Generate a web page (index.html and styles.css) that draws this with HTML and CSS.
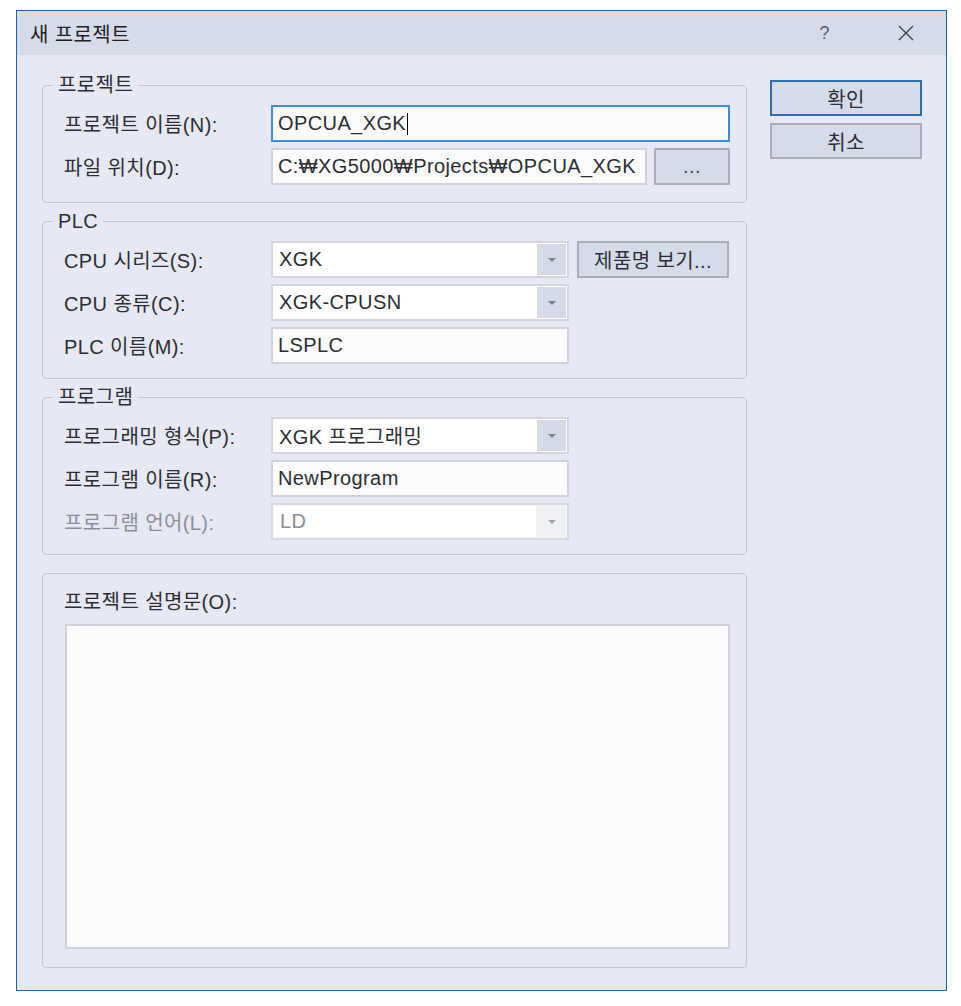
FILE: index.html
```html
<!DOCTYPE html>
<html lang="ko">
<head>
    <meta charset="UTF-8">
    <meta name="viewport" content="width=device-width, initial-scale=1.0">
    <title>새 프로젝트</title>
    <link rel="stylesheet" href="styles.css">
</head>
<body>

<div class="dialog">

    <div class="titlebar">
        <span class="title">새 프로젝트</span>
        <span class="title-help">?</span>
        <svg class="title-close" viewBox="0 0 16 16" width="16" height="16">
            <path d="M1 1 L15 15 M15 1 L1 15" stroke="#3a3d42" stroke-width="1.3" fill="none"/>
        </svg>
    </div>

    <div class="dialog-body">

        <div class="main">

            <fieldset class="group group-project">
                <legend>프로젝트</legend>
                <div class="row">
                    <label>프로젝트 이름(N):</label>
                    <div class="field field-focus wide">OPCUA_XGK<span class="caret"></span></div>
                </div>
                <div class="row">
                    <label>파일 위치(D):</label>
                    <div class="field wide">C:₩XG5000₩Projects₩OPCUA_XGK</div>
                    <button type="button" class="btn btn-browse">...</button>
                </div>
            </fieldset>

            <fieldset class="group">
                <legend>PLC</legend>
                <div class="row">
                    <label>CPU 시리즈(S):</label>
                    <div class="combo">
                        <span class="combo-text">XGK</span>
                        <span class="combo-arrow"><svg viewBox="0 0 8 4" width="8" height="4"><path d="M0 0 H8 L4 4 Z" fill="#7d838e"/></svg></span>
                    </div>
                    <button type="button" class="btn btn-products">제품명 보기...</button>
                </div>
                <div class="row">
                    <label>CPU 종류(C):</label>
                    <div class="combo">
                        <span class="combo-text">XGK-CPUSN</span>
                        <span class="combo-arrow"><svg viewBox="0 0 8 4" width="8" height="4"><path d="M0 0 H8 L4 4 Z" fill="#7d838e"/></svg></span>
                    </div>
                </div>
                <div class="row">
                    <label>PLC 이름(M):</label>
                    <div class="field short">LSPLC</div>
                </div>
            </fieldset>

            <fieldset class="group">
                <legend>프로그램</legend>
                <div class="row">
                    <label>프로그래밍 형식(P):</label>
                    <div class="combo">
                        <span class="combo-text">XGK 프로그래밍</span>
                        <span class="combo-arrow"><svg viewBox="0 0 8 4" width="8" height="4"><path d="M0 0 H8 L4 4 Z" fill="#7d838e"/></svg></span>
                    </div>
                </div>
                <div class="row">
                    <label>프로그램 이름(R):</label>
                    <div class="field short">NewProgram</div>
                </div>
                <div class="row disabled">
                    <label>프로그램 언어(L):</label>
                    <div class="combo combo-disabled">
                        <span class="combo-text">LD</span>
                        <span class="combo-arrow"><svg viewBox="0 0 8 4" width="8" height="4"><path d="M0 0 H8 L4 4 Z" fill="#a3a7ae"/></svg></span>
                    </div>
                </div>
            </fieldset>

            <div class="group group-desc">
                <label class="desc-label">프로젝트 설명문(O):</label>
                <div class="memo"></div>
            </div>

        </div>

        <div class="side">
            <button type="button" class="btn btn-default">확인</button>
            <button type="button" class="btn">취소</button>
        </div>

    </div>

</div>

</body>
</html>
```

FILE: styles.css
```css
* {
    box-sizing: border-box;
}

body {
    margin: 0;
    background-color: #fff;
    font-family: "Liberation Sans", "Noto Sans CJK KR", sans-serif;
    font-size: 20px;
    letter-spacing: 0.4px;
    color: #2b2e34;
}

.dialog {
    margin: 10px 0 0 16px;
    width: 931px;
    height: 981px;
    border: 1px solid #1d66ab;
    background-color: #e6e9f3;
    display: flex;
    flex-direction: column;
}

.titlebar {
    height: 44px;
    flex: none;
    background-color: #d5dbe8;
    display: flex;
    align-items: center;
    padding-left: 13px;
}

.title {
    flex: 1;
    color: #1f2126;
}

.title-help {
    font-size: 18px;
    color: #5b5f66;
}

.title-close {
    margin: 0 32px 0 68px;
}

.dialog-body {
    flex: 1;
    display: flex;
    gap: 23px;
    padding: 20px 24px 22px 25px;
}

.main {
    width: 705px;
    display: flex;
    flex-direction: column;
}

.side {
    width: 152px;
    padding-top: 5px;
    display: flex;
    flex-direction: column;
    gap: 7px;
}

.group {
    margin: 0;
    min-width: 0;
    border: 1px solid #c4c8d0;
    border-radius: 4px;
    padding: 10px 16px 14px 10px;
}

.group + .group {
    margin-top: 8px;
}

.group legend {
    padding: 0 5px;
    line-height: 20px;
}

.group-project {
    padding-bottom: 17px;
}

.row {
    display: flex;
    align-items: center;
    padding-left: 11px;
}

.row + .row {
    margin-top: 6px;
}

.row label {
    width: 207px;
    flex: none;
}

.row.disabled label {
    color: #8b8f97;
}

.field {
    height: 37px;
    border: 2px solid #cfd2da;
    background-color: #fcfcfc;
    padding: 0 5px;
    display: flex;
    align-items: center;
    white-space: nowrap;
}

.field.wide {
    flex: 1;
}

.field.short {
    width: 298px;
}

.field-focus {
    border-color: #3b8ee0;
}

.caret {
    width: 1px;
    height: 22px;
    margin-left: 1px;
    background-color: #000;
}

.combo {
    width: 298px;
    height: 37px;
    border: 2px solid #d3d6dd;
    background-color: #fff;
    display: flex;
}

.combo-text {
    flex: 1;
    display: flex;
    align-items: center;
    padding-left: 6px;
    white-space: nowrap;
}

.combo-arrow {
    width: 29px;
    margin: 1px 1px 1px 0;
    background-color: #d4dae7;
    display: flex;
    align-items: center;
    justify-content: center;
}

.combo-disabled {
    border-color: #d6d9df;
    background-color: #f4f5f8;
}

.combo-disabled .combo-text {
    margin: 1px 0 1px 1px;
    background-color: #fff;
    border-right: 1px solid #eceef2;
    color: #8a8d93;
}

.combo-disabled .combo-arrow {
    background-color: #eef0f4;
}

.btn {
    font: inherit;
    letter-spacing: inherit;
    color: #2b2e34;
    height: 36px;
    padding: 0;
    background-color: #d5dbe8;
    border: 2px solid #a8aeb8;
    cursor: pointer;
}

.btn-default {
    border-color: #2d6fae;
}

.btn-browse {
    width: 76px;
    height: 37px;
    margin-left: 7px;
    color: #4a4e55;
}

.btn-products {
    width: 152px;
    height: 37px;
    margin-left: 8px;
}

.group-desc {
    margin-top: 18px;
    flex: 1;
    display: flex;
    flex-direction: column;
    padding: 16px 16px 18px 21px;
}

.group + .group-desc {
    margin-top: 18px;
}

.desc-label {
    line-height: 24px;
}

.memo {
    flex: 1;
    margin: 10px 0 0 1px;
    border: 2px solid #cfd2da;
    background-color: #fbfbfb;
}
```
